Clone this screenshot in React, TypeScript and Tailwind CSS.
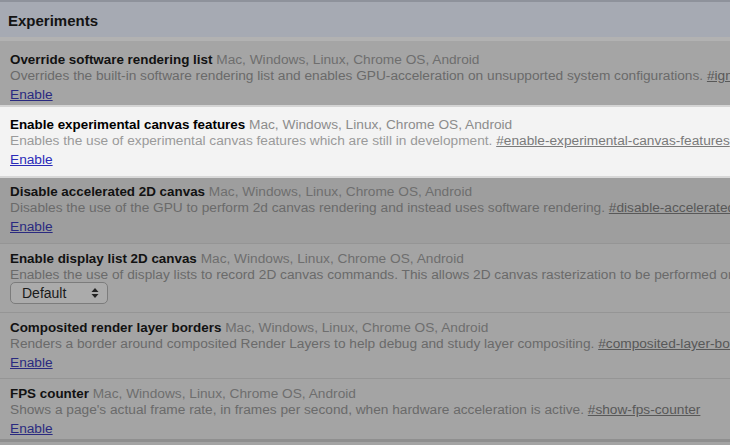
import React from "react";

type Row = {
  title: string;
  desc: string;
  hash?: string;
  select?: boolean;
};

const PLAT = "Mac, Windows, Linux, Chrome OS, Android";

function Enable({ hi }: { hi?: boolean }) {
  return (
    <div className="mt-[2px] h-[18px] leading-[18px]">
      <span className={`underline ${hi ? "text-[#2a2ab8]" : "text-[#2a2a80]"}`}>Enable</span>
    </div>
  );
}

function Lines({ r, hi }: { r: Row; hi?: boolean }) {
  return (
    <>
      <div className="h-[16px] leading-[16px] whitespace-nowrap">
        <span className={`text-[13.4px] font-bold ${hi ? "text-black" : "text-[#121212]"}`}>{r.title}</span>{" "}
        <span className={hi ? "text-[#8c8c8c]" : "text-[#6e6e6e]"}>{PLAT}</span>
      </div>
      <div className={`h-[16px] leading-[16px] whitespace-nowrap ${hi ? "text-[#9a9a9a]" : "text-[#6a6a6a]"}`}>
        {r.desc}
        {r.hash && (
          <>
            {" "}
            <span className={`underline ${hi ? "text-[#7a7a7a]" : "text-[#585858]"}`}>{r.hash}</span>
          </>
        )}
      </div>
    </>
  );
}

function SelectBox() {
  return (
    <div className="-mt-[1px] flex h-[22px] w-[98px] items-center justify-between rounded-[5px] border border-[#7c7c7c] bg-[#ababab] pl-[11px] pr-[8px] text-[14px] text-[#1a1a1a]">
      <span>Default</span>
      <svg width="8" height="12" viewBox="0 0 8 12">
        <path d="M4 1 L7.5 5 H0.5 Z" fill="#222" />
        <path d="M4 11 L7.5 7 H0.5 Z" fill="#222" />
      </svg>
    </div>
  );
}

export default function App() {
  const rows: Row[] = [
    {
      title: "Override software rendering list",
      desc: "Overrides the built-in software rendering list and enables GPU-acceleration on unsupported system configurations.",
      hash: "#ignore-gpu-blacklist",
    },
    {
      title: "Enable experimental canvas features",
      desc: "Enables the use of experimental canvas features which are still in development.",
      hash: "#enable-experimental-canvas-features",
    },
    {
      title: "Disable accelerated 2D canvas",
      desc: "Disables the use of the GPU to perform 2d canvas rendering and instead uses software rendering.",
      hash: "#disable-accelerated-2d-canvas",
    },
    {
      title: "Enable display list 2D canvas",
      desc: "Enables the use of display lists to record 2D canvas commands. This allows 2D canvas rasterization to be performed on a separate thread.",
      hash: "#enable-display-list-2d-canvas",
      select: true,
    },
    {
      title: "Composited render layer borders",
      desc: "Renders a border around composited Render Layers to help debug and study layer compositing.",
      hash: "#composited-layer-borders",
    },
    {
      title: "FPS counter",
      desc: "Shows a page's actual frame rate, in frames per second, when hardware acceleration is active.",
      hash: "#show-fps-counter",
    },
  ];

  return (
    <div
      className="h-[445px] w-[730px] overflow-hidden bg-[#a4a4a4] text-[13.7px]"
      style={{ fontFamily: '"Liberation Sans", Arial, Helvetica, sans-serif' }}
    >
      {/* header */}
      <div className="h-[37px] border-t-2 border-[#8e929b] bg-[#a6aab3] pl-[8px] pt-[10px] text-[15px] font-bold leading-[18px] text-[#141414]">
        Experiments
      </div>
      <div className="h-[4px] bg-[#b2b2b2]" />

      {/* row 1 */}
      <div className="h-[64px] overflow-hidden bg-[#a5a5a5] pl-[10px] pt-[11px]">
        <Lines r={rows[0]} />
        <Enable />
      </div>

      {/* highlighted row */}
      <div className="h-[73px] overflow-hidden border-y-[2px] border-t-[#d4d4d4] border-b-[#d8d8d8] bg-[#f3f3f3] pl-[10px] pt-[10px]">
        <Lines r={rows[1]} hi />
        <Enable hi />
      </div>

      {/* row 3 */}
      <div className="h-[65px] overflow-hidden bg-[#9e9e9e] pl-[10px] pt-[6px]">
        <Lines r={rows[2]} />
        <Enable />
      </div>

      {/* row 4 */}
      <div className="h-[69px] overflow-hidden border-t border-[#959595] bg-[#a4a4a4] pl-[10px] pt-[7px]">
        <Lines r={rows[3]} />
        <SelectBox />
      </div>

      {/* row 5 */}
      <div className="h-[66px] overflow-hidden border-t border-[#959595] bg-[#a4a4a4] pl-[10px] pt-[7px]">
        <Lines r={rows[4]} />
        <Enable />
      </div>

      {/* row 6 */}
      <div className="h-[64px] overflow-hidden border-t border-[#959595] border-b-[3px] border-b-[#8f8f8f] bg-[#a4a4a4] pl-[10px] pt-[7px]">
        <Lines r={rows[5]} />
        <Enable />
      </div>
    </div>
  );
}
